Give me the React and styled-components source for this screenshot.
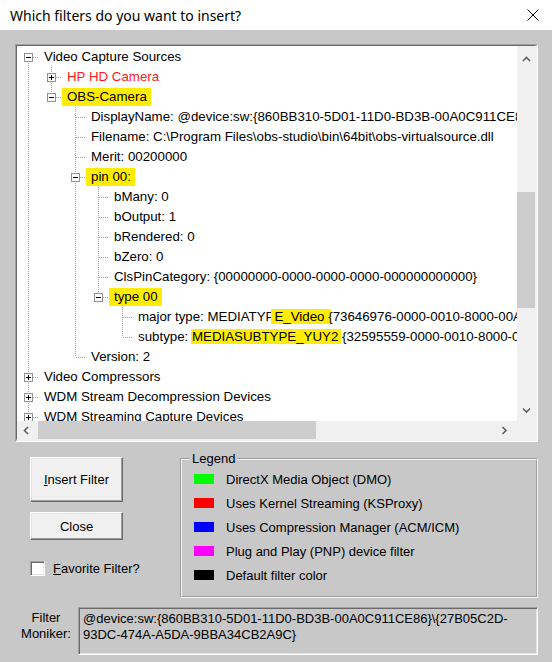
import styled, { createGlobalStyle, css } from "styled-components";

const GlobalStyle = createGlobalStyle`
    html, body {
        margin: 0;
        padding: 0;
    }
    body {
        background: #c8c8c8;
        font-family: "Liberation Sans", Arial, sans-serif;
        font-size: 13px;
        color: #000;
    }
`;

const vdots = "repeating-linear-gradient(to bottom, #a0a0a0 0 1px, transparent 1px 2px)";
const hdots = "repeating-linear-gradient(to right, #a0a0a0 0 1px, transparent 1px 2px)";
const yellow = "#ffec00";

const Window = styled.div`
    width: 552px;
    height: 662px;
    display: flex;
    flex-direction: column;
    background: #c8c8c8;
    overflow: hidden;
`;

const TitleBar = styled.div`
    flex: none;
    height: 30px;
    background: #fff;
    display: flex;
    align-items: center;
    justify-content: space-between;
    padding: 0 13px 0 10px;
    font-family: "Noto Sans", sans-serif;
    font-size: 14px;
`;

const Body = styled.div`
    flex: 1;
    display: flex;
    flex-direction: column;
    padding: 14px 14px 0 15px;
`;

// sunken frame: outer and inner edges
const Sunken = styled.div`
    border: 1px solid;
    border-color: #a0a0a0 #fff #fff #a0a0a0;
`;

const TreeFrame = styled.div`
    display: grid;
    grid-template-columns: 500px 18px;
    grid-template-rows: 375px 18px;
    border-style: solid;
    border-color: #696969 #f0f0f0 #f0f0f0 #696969;
    border-width: 1px 2px 2px 1px;
    background: #f0f0f0;
`;

const TreeView = styled.div`
    background: #fff;
    overflow: hidden;
    padding-top: 1px;
    font-size: 13.3px;
`;

const Row = styled.div`
    display: flex;
    height: 20px;
    white-space: nowrap;
`;

const Guide = styled.span`
    flex: none;
    width: ${p => p.$w}px;
    ${p => p.$line && css`
        background: ${vdots} no-repeat 11px 0 / 1px 100%;
    `}
`;

const Connector = styled.span`
    flex: none;
    width: 22px;
    display: flex;
    align-items: center;
    padding-left: 7px;
    box-sizing: border-box;
    background-image: ${hdots}${p => p.$top ? `, ${vdots}` : ""}${p => p.$bottom ? `, ${vdots}` : ""};
    background-repeat: no-repeat;
    background-position: 12px 10px${p => p.$top ? ", 11px 0" : ""}${p => p.$bottom ? ", 11px 10px" : ""};
    background-size: 10px 1px${p => p.$top ? ", 1px 10px" : ""}${p => p.$bottom ? ", 1px 10px" : ""};
`;

const Label = styled.span`
    padding: 0 4px 0 5px;
    margin: 1px 0;
    line-height: 18px;
    color: ${p => p.$color || "#000"};
    background: ${p => p.$mark ? yellow : "transparent"};
`;

const Mark = styled.span`
    background: ${yellow};
    box-shadow: ${p => p.$left || 0}px 0 0 ${yellow}, ${p => p.$right || 0}px 0 0 ${yellow};
`;

const VScroll = styled.div`
    display: flex;
    flex-direction: column;
    background: #f0f0f0;
`;

const HScroll = styled.div`
    display: flex;
    background: #f0f0f0;
`;

const ArrowBtn = styled.div`
    flex: none;
    display: flex;
    align-items: center;
    justify-content: center;
    width: ${p => p.$w ? `${p.$w}px` : "auto"};
    height: ${p => p.$h ? `${p.$h}px` : "auto"};
`;

const Track = styled.div`
    flex: 1;
    display: flex;
    flex-direction: ${p => p.$vertical ? "column" : "row"};
    padding: ${p => p.$vertical ? `${p.$offset}px 0 0 0` : `0 0 0 ${p.$offset}px`};
`;

const Thumb = styled.div`
    background: #cdcdcd;
    flex: none;
    width: ${p => p.$w}px;
    height: ${p => p.$h}px;
`;

const Lower = styled.div`
    display: grid;
    grid-template-columns: 165px 1fr;
    margin-top: 9px;
`;

const LeftCol = styled.div`
    display: flex;
    flex-direction: column;
    align-items: flex-start;
    padding: 6px 0 0 15px;
`;

const Button = styled.div`
    width: 93px;
    height: ${p => p.$h}px;
    box-sizing: border-box;
    margin-top: ${p => p.$mt || 0}px;
    display: flex;
    align-items: center;
    justify-content: center;
    background: #f0f0f0;
    border: 1px solid;
    border-color: #fff #696969 #696969 #fff;
    box-shadow: inset -1px -1px 0 #a0a0a0, inset 1px 1px 0 #e3e3e3;
    font-size: 13px;
`;

const CheckRow = styled.label`
    display: flex;
    align-items: center;
    gap: 8px;
    margin-top: 21px;
`;

const CheckBox = styled.span`
    width: 15px;
    height: 15px;
    box-sizing: border-box;
    background: #fff;
    border: 1px solid;
    border-color: #a0a0a0 #fff #fff #a0a0a0;
    box-shadow: inset 1px 1px 0 #696969, inset -1px -1px 0 #e3e3e3;
`;

const Group = styled.fieldset`
    margin: 0;
    padding: 0 10px 9px 12px;
    border: 2px groove #f4f4f4;
    min-width: 0;
`;

const GroupTitle = styled.legend`
    padding: 0 2px;
    margin-left: -4px;
    line-height: 16px;
    font-size: 13px;
`;

const LegendRow = styled.div`
    display: flex;
    align-items: center;
    gap: 12px;
    height: 24px;
`;

const Swatch = styled.span`
    width: 20px;
    height: 10px;
    flex: none;
    background: ${p => p.$color};
`;

const MonikerRow = styled.div`
    display: grid;
    grid-template-columns: 58px 1fr;
    column-gap: 3px;
    margin-top: 9px;
    padding-left: 2px;
`;

const MonikerLabel = styled.div`
    text-align: center;
    line-height: 16px;
    padding-top: 3px;
`;

const MonikerBox = styled.div`
    height: 48px;
    box-sizing: border-box;
    border: 1px solid;
    border-color: #a0a0a0 #fff #fff #a0a0a0;
    box-shadow: inset 1px 1px 0 #696969, inset -1px -1px 0 #e3e3e3;
    padding: 3px 4px;
    line-height: 16px;
`;

function Expander({ open }) {
    return (
        <svg width="9" height="9" viewBox="0 0 9 9">
            <rect x="0.5" y="0.5" width="8" height="8" fill="#fff" stroke="#919191" />
            <line x1="2" y1="4.5" x2="7" y2="4.5" stroke="#000" />
            {!open && <line x1="4.5" y1="2" x2="4.5" y2="7" stroke="#000" />}
        </svg>
    );
}

function Chevron({ dir }) {
    const pts = {
        up: "1,5 4.5,1.5 8,5",
        down: "1,1.5 4.5,5 8,1.5",
        left: "5,1 1.5,4.5 5,8",
        right: "1.5,1 5,4.5 1.5,8",
    }[dir];
    const vertical = dir === "up" || dir === "down";
    return (
        <svg width={vertical ? 9 : 7} height={vertical ? 7 : 9} viewBox={vertical ? "0 0 9 7" : "0 0 7 9"}>
            <polyline points={pts} fill="none" stroke="#606060" strokeWidth="1.6" />
        </svg>
    );
}

const rows = [
    { guides: [], exp: "open", top: false, bottom: true, text: "Video Capture Sources" },
    { guides: [true], exp: "closed", top: true, bottom: true, text: "HP HD Camera", color: "#ff1a1a" },
    { guides: [true], exp: "open", top: true, bottom: false, text: "OBS-Camera", mark: true },
    { guides: [true, false], top: true, bottom: true, text: "DisplayName: @device:sw:{860BB310-5D01-11D0-BD3B-00A0C911CE86}" },
    { guides: [true, false], top: true, bottom: true, text: "Filename: C:\\Program Files\\obs-studio\\bin\\64bit\\obs-virtualsource.dll" },
    { guides: [true, false], top: true, bottom: true, text: "Merit: 00200000" },
    { guides: [true, false], exp: "open", top: true, bottom: true, text: "pin 00:", mark: true },
    { guides: [true, false, true], top: true, bottom: true, text: "bMany: 0" },
    { guides: [true, false, true], top: true, bottom: true, text: "bOutput: 1" },
    { guides: [true, false, true], top: true, bottom: true, text: "bRendered: 0" },
    { guides: [true, false, true], top: true, bottom: true, text: "bZero: 0" },
    { guides: [true, false, true], top: true, bottom: true, text: "ClsPinCategory: {00000000-0000-0000-0000-000000000000}" },
    { guides: [true, false, true], exp: "open", top: true, bottom: false, text: "type 00", mark: true },
    {
        guides: [true, false, true, false], top: true, bottom: true,
        text: <>major type: MEDIATYP<Mark $left={-3} $right={6}>E_Video</Mark> {"{73646976-0000-0010-8000-00AA00389B71}"}</>,
    },
    {
        guides: [true, false, true, false], top: true, bottom: false,
        text: <>subtype: <Mark $left={-1} $right={3}>MEDIASUBTYPE_YUY2</Mark> {"{32595559-0000-0010-8000-00AA00389B71}"}</>,
    },
    { guides: [true, false], top: true, bottom: false, text: "Version: 2" },
    { guides: [], exp: "closed", top: true, bottom: true, text: "Video Compressors" },
    { guides: [], exp: "closed", top: true, bottom: true, text: "WDM Stream Decompression Devices" },
    { guides: [], exp: "closed", top: true, bottom: true, text: "WDM Streaming Capture Devices" },
];

const legend = [
    { color: "#00ff00", text: "DirectX Media Object (DMO)" },
    { color: "#ff0000", text: "Uses Kernel Streaming (KSProxy)" },
    { color: "#0000ff", text: "Uses Compression Manager (ACM/ICM)" },
    { color: "#ff00ff", text: "Plug and Play (PNP) device filter" },
    { color: "#000000", text: "Default filter color" },
];

export default function App() {
    return (
        <Window>
            <GlobalStyle />
            <TitleBar>
                <span>Which filters do you want to insert?</span>
                <svg width="12" height="12" viewBox="0 0 12 12">
                    <path d="M0.5 0.5 L11.5 11.5 M11.5 0.5 L0.5 11.5" stroke="#000" strokeWidth="1" />
                </svg>
            </TitleBar>
            <Body>
                <Sunken>
                    <TreeFrame>
                        <TreeView>
                            {rows.map((row, i) => (
                                <Row key={i}>
                                    {row.guides.map((on, g) => (
                                        <Guide key={g} $w={g % 2 === 0 ? 23 : 24} $line={on} />
                                    ))}
                                    <Connector $top={row.top} $bottom={row.bottom}>
                                        {row.exp && <Expander open={row.exp === "open"} />}
                                    </Connector>
                                    <Label $color={row.color} $mark={row.mark}>{row.text}</Label>
                                </Row>
                            ))}
                        </TreeView>
                        <VScroll>
                            <ArrowBtn $h={27}><Chevron dir="up" /></ArrowBtn>
                            <Track $vertical $offset={119}>
                                <Thumb $w={18} $h={116} />
                            </Track>
                            <ArrowBtn $h={21}><Chevron dir="down" /></ArrowBtn>
                        </VScroll>
                        <HScroll>
                            <ArrowBtn $w={19}><Chevron dir="left" /></ArrowBtn>
                            <Track $offset={2}>
                                <Thumb $w={278} $h={18} />
                            </Track>
                            <ArrowBtn $w={26}><Chevron dir="right" /></ArrowBtn>
                        </HScroll>
                        <div />
                    </TreeFrame>
                </Sunken>

                <Lower>
                    <LeftCol>
                        <Button $h={45}><span><u>I</u>nsert Filter</span></Button>
                        <Button $h={28} $mt={10}>Close</Button>
                        <CheckRow>
                            <CheckBox />
                            <span><u>F</u>avorite Filter?</span>
                        </CheckRow>
                    </LeftCol>
                    <Group>
                        <GroupTitle>Legend</GroupTitle>
                        {legend.map(item => (
                            <LegendRow key={item.text}>
                                <Swatch $color={item.color} />
                                <span>{item.text}</span>
                            </LegendRow>
                        ))}
                    </Group>
                </Lower>

                <MonikerRow>
                    <MonikerLabel>Filter<br />Moniker:</MonikerLabel>
                    <MonikerBox>
                        {"@device:sw:{860BB310-5D01-11D0-BD3B-00A0C911CE86}\\{27B05C2D-"}
                        <br />
                        {"93DC-474A-A5DA-9BBA34CB2A9C}"}
                    </MonikerBox>
                </MonikerRow>
            </Body>
        </Window>
    );
}
